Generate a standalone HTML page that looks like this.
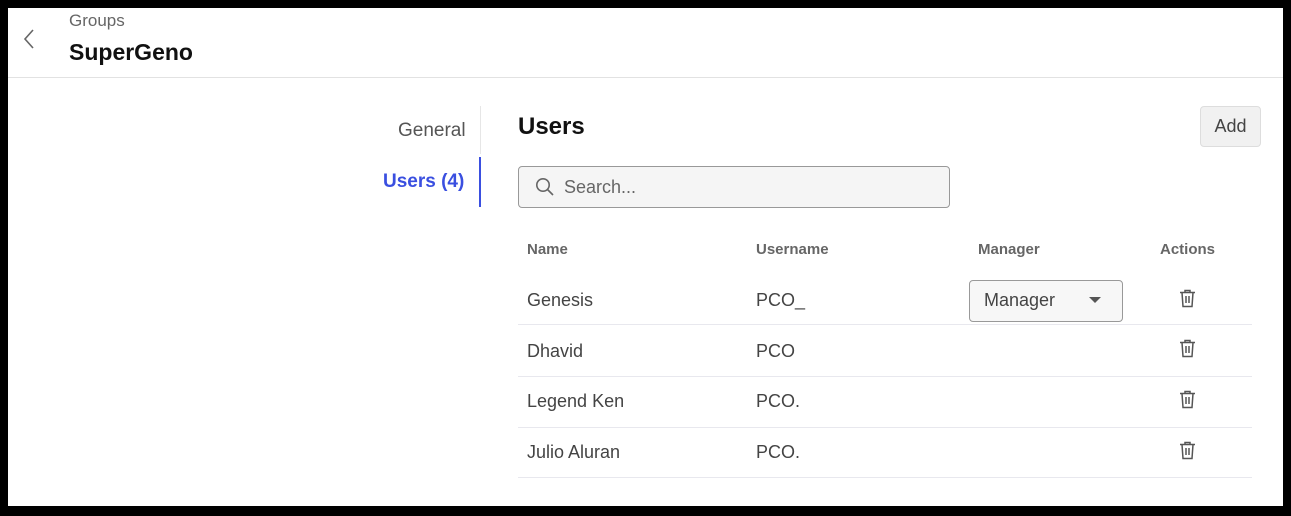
<!DOCTYPE html>
<html><head><style>
*{margin:0;padding:0;box-sizing:border-box}
body{width:1291px;height:516px;background:#000;position:relative;font-family:"Liberation Sans",Arial,sans-serif;overflow:hidden}
.page{position:absolute;left:8px;top:8px;width:1275px;height:498px;background:#fff}
.a{position:absolute;white-space:nowrap}
.hd{color:#666;font-size:15px;font-weight:bold}
.cell{color:#444;font-size:18px}
.line{position:absolute;left:518px;width:734px;height:1px;background:#e8e8ee}
.trash{position:absolute;left:1179px}
</style></head><body>
<div class="page"></div>
<svg class="a" style="left:22px;top:28px" width="14" height="22" viewBox="0 0 14 22"><path d="M11 2 L3 11 L11 20" fill="none" stroke="#666" stroke-width="1.6"/></svg>
<div class="a" style="left:69px;top:11px;font-size:17px;color:#666">Groups</div>
<div class="a" style="left:69px;top:39px;font-size:23px;font-weight:bold;color:#111">SuperGeno</div>
<div class="a" style="left:8px;top:77px;width:1275px;height:1px;background:#e2e2e2"></div>
<div class="a" style="left:480px;top:106px;width:1px;height:48px;background:#e6e6e6"></div>
<div class="a" style="left:479px;top:157px;width:2px;height:50px;background:#3a4fe0"></div>
<div class="a" style="left:398px;top:120px;font-size:19px;color:#555">General</div>
<div class="a" style="left:383px;top:171px;font-size:19px;color:#3a4fe0;font-weight:bold">Users (4)</div>
<div class="a" style="left:518px;top:113px;font-size:24px;font-weight:bold;color:#111">Users</div>
<div class="a" style="left:1200px;top:106px;width:61px;height:41px;background:#f1f1f1;border:1px solid #ddd;border-radius:4px;font-size:18px;color:#444;text-align:center;line-height:39px">Add</div>
<div class="a" style="left:518px;top:166px;width:432px;height:42px;background:#f5f5f5;border:1px solid #999;border-radius:4px"></div>
<svg class="a" style="left:535px;top:177px" width="20" height="20" viewBox="0 0 20 20"><circle cx="8" cy="8" r="6.2" fill="none" stroke="#666" stroke-width="1.6"/><path d="M12.5 12.5 L18 18" stroke="#666" stroke-width="1.6"/></svg>
<div class="a" style="left:564px;top:177px;font-size:18px;color:#666">Search...</div>
<div class="a hd" style="left:527px;top:241px">Name</div>
<div class="a hd" style="left:756px;top:241px">Username</div>
<div class="a hd" style="left:978px;top:241px">Manager</div>
<div class="a hd" style="left:1160px;top:241px">Actions</div>
<div class="a cell" style="left:527px;top:290px">Genesis</div>
<div class="a cell" style="left:756px;top:290px">PCO_</div>
<div class="a" style="left:969px;top:280px;width:154px;height:42px;background:#f7f7f7;border:1px solid #999;border-radius:4px"></div>
<div class="a cell" style="left:984px;top:290px">Manager</div>
<svg class="a" style="left:1089px;top:297px" width="12" height="6"><path d="M0 0 L12 0 L6 6Z" fill="#555"/></svg>
<div class="line" style="top:324px"></div>
<div class="a cell" style="left:527px;top:341px">Dhavid</div>
<div class="a cell" style="left:756px;top:341px">PCO</div>
<div class="line" style="top:376px"></div>
<div class="a cell" style="left:527px;top:391px">Legend Ken</div>
<div class="a cell" style="left:756px;top:391px">PCO.</div>
<div class="line" style="top:427px"></div>
<div class="a cell" style="left:527px;top:442px">Julio Aluran</div>
<div class="a cell" style="left:756px;top:442px">PCO.</div>
<div class="line" style="top:477px"></div>
<svg class="trash" style="top:289px" width="17" height="19" viewBox="0 0 17 19"><path d="M1 3.5H16M6 3.5V1.5H11V3.5M3 3.5L4 17.5H13L14 3.5M7 7V14M10 7V14" fill="none" stroke="#555" stroke-width="1.5"/></svg>
<svg class="trash" style="top:339px" width="17" height="19" viewBox="0 0 17 19"><path d="M1 3.5H16M6 3.5V1.5H11V3.5M3 3.5L4 17.5H13L14 3.5M7 7V14M10 7V14" fill="none" stroke="#555" stroke-width="1.5"/></svg>
<svg class="trash" style="top:390px" width="17" height="19" viewBox="0 0 17 19"><path d="M1 3.5H16M6 3.5V1.5H11V3.5M3 3.5L4 17.5H13L14 3.5M7 7V14M10 7V14" fill="none" stroke="#555" stroke-width="1.5"/></svg>
<svg class="trash" style="top:441px" width="17" height="19" viewBox="0 0 17 19"><path d="M1 3.5H16M6 3.5V1.5H11V3.5M3 3.5L4 17.5H13L14 3.5M7 7V14M10 7V14" fill="none" stroke="#555" stroke-width="1.5"/></svg>
</body></html>
